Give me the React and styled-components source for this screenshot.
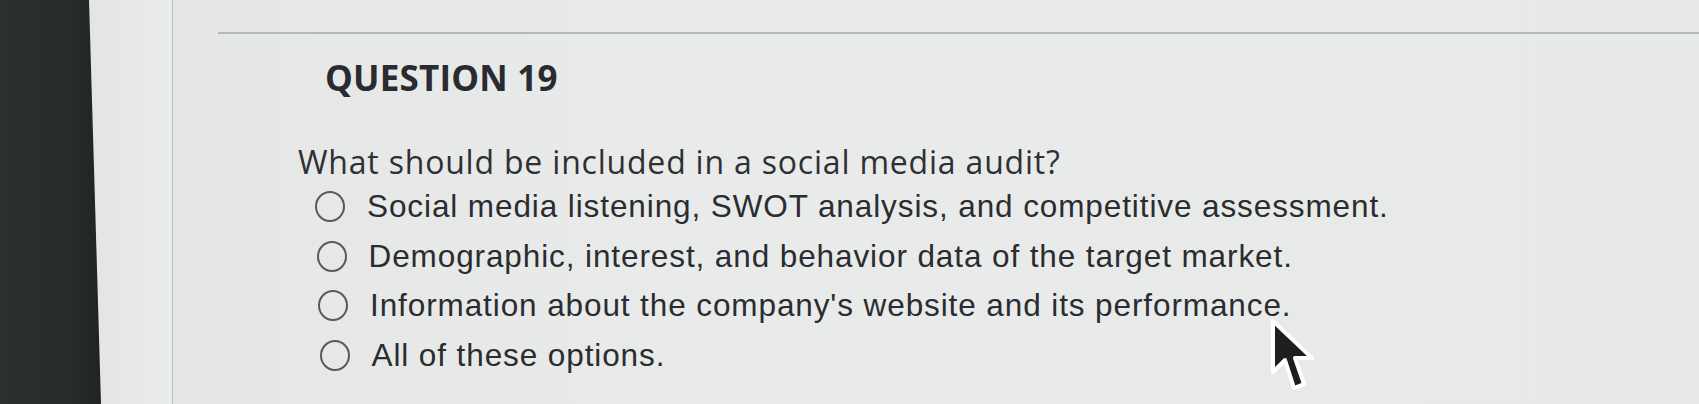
import React from "react";
import styled, { createGlobalStyle } from "styled-components";

const Global = createGlobalStyle`
  html, body, #root { margin: 0; padding: 0; height: 100%; }
  body { background: #e7e9e8; overflow: hidden; }
`;

const Screen = styled.div`
  position: relative;
  display: flex;
  width: 1699px;
  height: 404px;
  background: linear-gradient(90deg, #e4e6e5 0%, #e9ebea 40%, #e8eae9 100%);
`;

const Bezel = styled.div`
  flex: 0 0 102px;
  background: linear-gradient(90deg, #2c302f 0%, #272b2a 70%, #202322 100%);
  clip-path: polygon(0 0, 89px 0, 101px 100%, 0 100%);
`;

const Margin = styled.div`
  flex: 0 0 82px;
  margin-left: -12px;
  background: linear-gradient(90deg, #e3e5e4, #ebedec);
  border-right: 1px solid #b9bdbc;
`;

const Content = styled.main`
  flex: 1;
  display: flex;
  flex-direction: column;
  padding-top: 32px;
`;

const Rule = styled.hr`
  margin: 0 0 0 45px;
  border: none;
  height: 2px;
  background: #b4b8b8;
`;

const Heading = styled.h1`
  margin: 23px 0 0 152px;
  font-family: "Open Sans", sans-serif;
  font-weight: 700;
  font-size: 35px;
  line-height: 42px;
  color: #2a2b30;
  letter-spacing: 0.2px;
`;

const Question = styled.p`
  margin: 44px 0 0 125px;
  font-family: "Open Sans", sans-serif;
  font-weight: 400;
  font-size: 32px;
  line-height: 38px;
  letter-spacing: 0.8px;
  color: #2f3034;
`;

const Options = styled.ul`
  list-style: none;
  margin: 1px 0 0 142px;
  padding: 0;
  display: flex;
  flex-direction: column;
`;

const Option = styled.li`
  display: flex;
  align-items: center;
  gap: 22px;
  height: 49.5px;
  padding-left: ${(p) => p.$shift}px;
  font-family: "Liberation Sans", Arial, sans-serif;
  font-size: 31.5px;
  letter-spacing: 0.9px;
  color: #2b2c30;
`;

const Radio = styled.span`
  flex: 0 0 auto;
  width: 26px;
  height: 27px;
  border: 2.5px solid #58595c;
  border-radius: 50%;
`;

const Cursor = styled.svg`
  position: absolute;
  left: 1255px;
  top: 305px;
  width: 75px;
  height: 100px;
`;

const options = [
  "Social media listening, SWOT analysis, and competitive assessment.",
  "Demographic, interest, and behavior data of the target market.",
  "Information about the company's website and its performance.",
  "All of these options.",
];

export default function App() {
  return (
    <>
      <Global />
      <Screen>
        <Bezel />
        <Margin />
        <Content>
          <Rule />
          <Heading>QUESTION 19</Heading>
          <Question>What should be included in a social media audit?</Question>
          <Options>
            {options.map((o, i) => (
              <Option key={i} $shift={i * 1.5}>
                <Radio />
                <span>{o}</span>
              </Option>
            ))}
          </Options>
        </Content>
        <Cursor viewBox="0 0 75 100">
          <path
            d="M18 16 L18 67 L30 55 L39 83 L49 79 L40 53 L57 53 Z"
            fill="#1d1e20"
            stroke="#ffffff"
            strokeWidth="4"
            strokeLinejoin="round"
          />
        </Cursor>
      </Screen>
    </>
  );
}
